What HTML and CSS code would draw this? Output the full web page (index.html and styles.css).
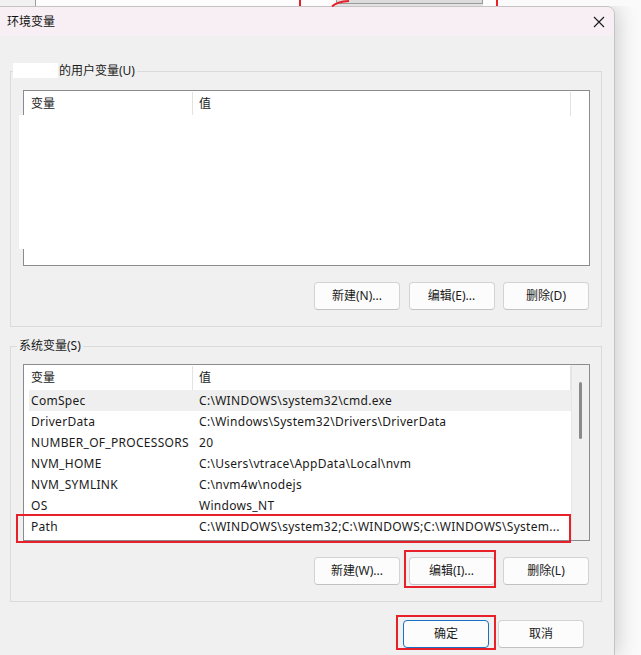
FILE: index.html
```html
<!DOCTYPE html>
<html lang="zh-CN">
<head>
<meta charset="utf-8">
<title>环境变量</title>
<link rel="stylesheet" href="styles.css">
</head>
<body>
<div class="screen">
  <div class="bg-strip">
    <div class="bg-left"></div>
    <div class="bg-gap1"></div>
    <div class="bg-red"></div>
    <div class="bg-gap2"></div>
    <div class="bg-bar"></div>
    <div class="bg-gap3"></div>
    <div class="bg-red"></div>
    <div class="bg-rest"></div>
    <svg class="bg-arrow" width="24" height="7" viewBox="0 0 24 7"><path d="M1 6.5 Q6 1.5 18 1" fill="none" stroke="#e8202a" stroke-width="2"/></svg>
  </div>

  <div class="dialog">
    <div class="titlebar">
      <span class="title">环境变量</span>
      <svg class="close" width="12" height="12" viewBox="0 0 12 12"><path d="M1 1 L11 11 M11 1 L1 11" stroke="#1a1a1a" stroke-width="1.1" fill="none"/></svg>
    </div>

    <div class="content">
      <fieldset class="group group-user">
        <legend><span class="redact"></span>的用户变量(U)</legend>
        <div class="listview user-list">
          <div class="lv-main">
            <div class="lv-head">
              <div class="hcell h1">变量</div>
              <div class="hcell h2">值</div>
            </div>
          </div>
          <div class="lv-filler"></div>
        </div>
        <div class="btnrow">
          <button class="btn">新建(N)...</button>
          <button class="btn">编辑(E)...</button>
          <button class="btn">删除(D)</button>
        </div>
      </fieldset>

      <fieldset class="group group-sys">
        <legend>系统变量(S)</legend>
        <div class="listview sys-list">
          <div class="lv-main">
            <div class="lv-head">
              <div class="hcell h1">变量</div>
              <div class="hcell h2">值</div>
            </div>
            <div class="row selected"><div class="c1">ComSpec</div><div class="c2">C:\WINDOWS\system32\cmd.exe</div></div>
            <div class="row"><div class="c1">DriverData</div><div class="c2">C:\Windows\System32\Drivers\DriverData</div></div>
            <div class="row"><div class="c1">NUMBER_OF_PROCESSORS</div><div class="c2">20</div></div>
            <div class="row"><div class="c1">NVM_HOME</div><div class="c2">C:\Users\vtrace\AppData\Local\nvm</div></div>
            <div class="row"><div class="c1">NVM_SYMLINK</div><div class="c2">C:\nvm4w\nodejs</div></div>
            <div class="row"><div class="c1">OS</div><div class="c2">Windows_NT</div></div>
            <div class="row"><div class="c1">Path</div><div class="c2">C:\WINDOWS\system32;C:\WINDOWS;C:\WINDOWS\System...</div></div>
          </div>
          <div class="scrollbar"><div class="thumb"></div></div>
        </div>
        <div class="btnrow">
          <button class="btn">新建(W)...</button>
          <button class="btn">编辑(I)...</button>
          <button class="btn">删除(L)</button>
        </div>
      </fieldset>

      <div class="dlg-buttons">
        <button class="btn btn-default">确定</button>
        <button class="btn">取消</button>
      </div>
    </div>
  </div>

  <div class="redact-block"></div>
  <div class="mark mark-path"></div>
  <div class="mark mark-edit"></div>
  <div class="mark mark-ok"></div>
</div>
</body>
</html>
```

FILE: styles.css
```css
* { box-sizing: border-box; }

html, body {
  margin: 0;
  padding: 0;
}

body {
  width: 641px;
  height: 655px;
  overflow: hidden;
  background: #fafafa;
  font-family: "Noto Sans", "Noto Sans CJK SC", sans-serif;
  font-size: 12px;
  color: #1a1a1a;
}

.screen {
  position: relative;
  width: 641px;
  height: 655px;
  overflow: hidden;
  background: #fafafa;
}

/* background window peeking above the dialog */
.bg-strip {
  position: relative;
  display: flex;
  height: 6px;
}
.bg-left { width: 36px; background: #f1f1f1; border-right: 1px solid #9c9c9c; }
.bg-gap1 { width: 263px; background: #fdfdfd; }
.bg-red { width: 2px; background: #e8202a; }
.bg-gap2 { width: 35px; background: #fdfdfd; }
.bg-bar { width: 147px; height: 4px; background: #dcdcdc; border: 1px solid #9a9a9a; border-top: 0; }
.bg-gap3 { width: 13px; background: #fdfdfd; }
.bg-rest { flex: 1; background: #fafafa; }
.bg-arrow { position: absolute; left: 331px; top: 0; }

/* dialog */
.dialog {
  width: 616px;
  height: 650px;
  margin-left: -1px;
  background: #f0f0f0;
  border: 1px solid #c4c4c4;
  border-top-right-radius: 8px;
  box-shadow: 2px 0 22px rgba(0, 0, 0, 0.2);
  overflow: hidden;
}

.titlebar {
  height: 29px;
  background: #f7eff3;
  display: flex;
  align-items: center;
  justify-content: space-between;
  padding: 0 9px 0 7px;
}
.title { font-size: 12px; line-height: 16px; color: #111; }
.close { display: block; margin-top: 1px; }

.content {
  padding: 27px 12px 0 10px;
}

.group {
  margin: 0;
  border: 1px solid #dadada;
  padding: 11px 11px 16px 12px;
  min-width: 0;
}
.group legend {
  padding: 0 2px;
  margin-left: -6px;
  line-height: 16px;
  font-size: 12px;
  color: #1a1a1a;
}
.group-sys {
  margin-top: 11px;
  padding-top: 10px;
}
.redact {
  display: inline-block;
  width: 45px;
  height: 15px;
  background: #ffffff;
  vertical-align: top;
  margin-left: -6px;
  margin-right: 1px;
}

/* list view */
.listview {
  display: flex;
  background: #ffffff;
  border: 1px solid #8b8b90;
  overflow: hidden;
}
.user-list { height: 176px; }
.sys-list { height: 177px; }

.lv-main {
  width: 547px;
  overflow: hidden;
}
.lv-filler { flex: 1; }

.lv-head {
  display: flex;
  height: 25px;
  padding-top: 1px;
}
.hcell {
  height: 24px;
  line-height: 24px;
  border-right: 1px solid #e3e3e3;
  white-space: nowrap;
}
.h1 { width: 169px; padding-left: 7px; }
.h2 { width: 378px; padding-left: 6px; }

.row {
  display: flex;
  width: 542px;
  height: 21px;
  line-height: 21px;
  margin-left: 5px;
  white-space: nowrap;
  letter-spacing: 0.3px;
}
.row.selected { background: #efefef; }
.c1 { width: 164px; padding-left: 2px; overflow: hidden; }
.c2 { flex: 1; padding-left: 6px; overflow: hidden; }

.scrollbar {
  flex: 1;
  background: #f0f0f0;
  border-left: 1px solid #e6e6e6;
  padding: 17px 0 0 7px;
}
.thumb {
  width: 3px;
  height: 57px;
  border-radius: 2px;
  background: #8a8a8a;
}

/* buttons */
.btnrow {
  display: flex;
  justify-content: flex-end;
  gap: 8.5px;
  margin-top: 16px;
  padding-right: 1px;
}
.btn {
  width: 86px;
  height: 28px;
  padding: 0;
  border: 1px solid #d3d3d3;
  border-bottom-color: #c2c2c2;
  border-radius: 4px;
  background: #fcfcfc;
  font-family: inherit;
  font-size: 12px;
  color: #1a1a1a;
  line-height: 16px;
}
.btn-default {
  border-color: #1c6fc4;
}

.dlg-buttons {
  display: flex;
  justify-content: flex-end;
  gap: 9px;
  margin-top: 18px;
  padding-right: 18px;
}

/* overlays: redaction and red annotation frames */
.redact-block {
  position: absolute;
  left: 19px;
  top: 115px;
  width: 200px;
  height: 134px;
  background: #ffffff;
}
.mark {
  position: absolute;
  border: 2px solid #e8202a;
}
.mark-path { left: 16px; top: 514px; width: 555px; height: 29px; }
.mark-edit { left: 404px; top: 550px; width: 92px; height: 38px; }
.mark-ok { left: 396px; top: 615px; width: 100px; height: 35px; }
```
